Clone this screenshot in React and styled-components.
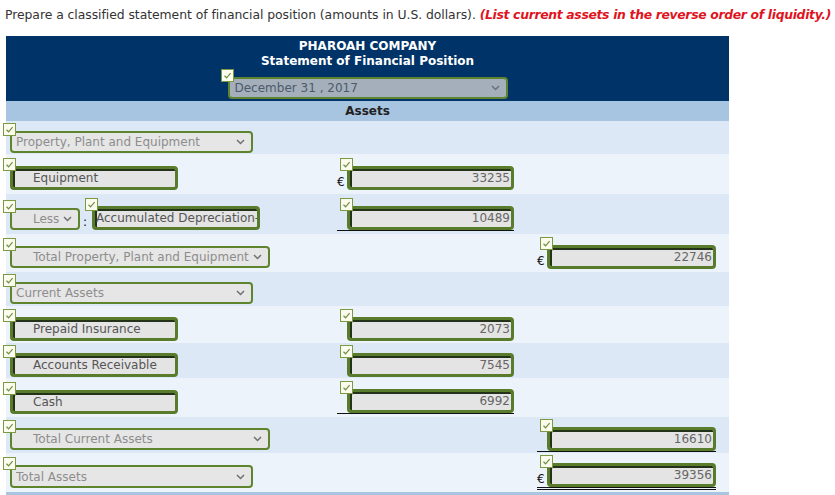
import React from "react";
import styled, { createGlobalStyle } from "styled-components";

const Global = createGlobalStyle`
  html, body { margin: 0; padding: 0; background: #fff; }
  body { font-family: "DejaVu Sans", Verdana, sans-serif; }
`;

const Page = styled.div`
  padding: 7px 0 0 6px;
  width: 829px;
`;

const Instruction = styled.p`
  margin: 0 0 0 -1px;
  font-size: 12.4px;
  line-height: 16px;
  color: #333;
  white-space: nowrap;
  letter-spacing: -0.05px;
`;

const Red = styled.span`
  color: #e0141e;
  font-weight: bold;
  font-style: italic;
  letter-spacing: -0.33px;
`;

const Table = styled.div`
  margin-top: 13px;
  width: 723px;
  border-bottom: 4px solid #a8c4df;
`;

const Header = styled.div`
  background: #003468;
  color: #fff;
  display: flex;
  flex-direction: column;
  align-items: center;
  padding: 3px 0 2px;
  font-size: 12px;
  line-height: 15px;
`;

const Title = styled.div`
  font-weight: bold;
`;

const SubBar = styled.div`
  background: #a7c4e0;
  height: 20px;
  line-height: 20px;
  text-align: center;
  font-weight: bold;
  font-size: 12px;
  color: #222;
`;

const Row = styled.div`
  display: grid;
  grid-template-columns: 330px 200px 193px;
  height: ${(p) => p.$h}px;
  background: ${(p) => (p.$alt ? "#edf3fb" : "#dde8f6")};
  align-items: center;
`;

const LabelCell = styled.div`
  display: flex;
  align-items: flex-end;
  padding-left: 4px;
`;

const NumCell = styled.div`
  display: flex;
  align-items: flex-end;
  padding-left: 1px;
`;

const NumWrap = styled.div`
  display: flex;
  align-items: flex-end;
  border-bottom: ${(p) =>
    p.$line === "double" ? "3px double #111" : p.$line === "single" ? "1px solid #111" : "none"};
`;

const Field = styled.div`
  position: relative;
  padding-top: 8px;
`;

const CheckBox = styled.svg`
  position: absolute;
  top: 0;
  left: -7px;
  width: 13px;
  height: 13px;
`;

const Check = () => (
  <CheckBox viewBox="0 0 13 13">
    <rect x="0.5" y="0.5" width="12" height="12" fill="#fbfbee" stroke="#7b9a43" />
    <path d="M3.5 6.8 L5.6 8.8 L9.6 4.2" fill="none" stroke="#6f8f45" strokeWidth="1.2" />
  </CheckBox>
);

const Select = styled.div`
  box-sizing: border-box;
  width: ${(p) => p.$w}px;
  height: ${(p) => p.$hgt || 22}px;
  border: 2px solid #5e852d;
  border-radius: 4px;
  background: ${(p) => (p.$dark ? "#a4afbb" : "#e6e6e6")};
  color: ${(p) => (p.$dark ? "#4d5a6b" : "#8d8d8d")};
  font-size: 12px;
  font-weight: normal;
  display: flex;
  align-items: center;
  padding-left: ${(p) => p.$pad}px;
  padding-right: 6px;
`;

const SelText = styled.span`
  flex: 1;
  white-space: nowrap;
  overflow: hidden;
`;

const Chevron = () => (
  <svg width="9" height="6" viewBox="0 0 9 6">
    <path d="M1 1 L4.5 4.5 L8 1" fill="none" stroke="#707070" strokeWidth="1.5" />
  </svg>
);

const TextBox = styled.div`
  box-sizing: border-box;
  width: ${(p) => p.$w}px;
  height: ${(p) => p.$hgt || 24}px;
  border: 3px solid #587c2b;
  border-radius: 4px;
  box-shadow: inset 2px 2px 0 #24321a;
  background: #e4e4e4;
  color: ${(p) => (p.$num ? "#666" : "#555")};
  font-size: 12px;
  display: flex;
  align-items: center;
  justify-content: ${(p) => (p.$num ? "flex-end" : "flex-start")};
  padding-left: ${(p) => p.$pad || 0}px;
  padding-right: ${(p) => (p.$num ? 1 : 0)}px;
  white-space: nowrap;
  overflow: hidden;
`;

const Currency = styled.span`
  width: 10px;
  font-size: 12px;
  color: #111;
  line-height: 12px;
  padding-bottom: 2px;
`;

const Colon = styled.span`
  font-size: 12px;
  color: #111;
  width: 12px;
  padding-left: 3px;
  box-sizing: border-box;
  padding-bottom: 1px;
`;

const Amount = ({ value, cur, line, w = 167 }) => (
  <NumWrap $line={line}>
    <Currency>{cur ? "€" : ""}</Currency>
    <Field>
      <Check />
      <TextBox $w={w} $num>
        {value}
      </TextBox>
    </Field>
  </NumWrap>
);

const SelField = ({ w, pad, text, hgt, dark }) => (
  <Field>
    <Check />
    <Select $w={w} $pad={pad} $hgt={hgt} $dark={dark}>
      <SelText>{text}</SelText>
      <Chevron />
    </Select>
  </Field>
);

const TextField = ({ text, w = 168, pad = 20 }) => (
  <Field>
    <Check />
    <TextBox $w={w} $pad={pad}>
      {text}
    </TextBox>
  </Field>
);

export default function App() {
  return (
    <>
      <Global />
      <Page>
        <Instruction>
          Prepare a classified statement of financial position (amounts in U.S. dollars).{" "}
          <Red>(List current assets in the reverse order of liquidity.)</Red>
        </Instruction>
        <Table>
          <Header>
            <Title>PHAROAH COMPANY</Title>
            <Title>Statement of Financial Position</Title>
            <SelField w={280} pad={5} text="December 31 , 2017" dark />
          </Header>
          <SubBar>Assets</SubBar>

          <Row $h={33}>
            <LabelCell>
              <SelField w={243} pad={4} text="Property, Plant and Equipment" />
            </LabelCell>
            <div />
            <div />
          </Row>

          <Row $h={40} $alt>
            <LabelCell>
              <TextField text="Equipment" />
            </LabelCell>
            <NumCell>
              <Amount value="33235" cur />
            </NumCell>
            <div />
          </Row>

          <Row $h={40}>
            <LabelCell>
              <SelField w={70} pad={21} text="Less" />
              <Colon>:</Colon>
              <TextField text="Accumulated Depreciation-" pad={1} />
            </LabelCell>
            <NumCell>
              <Amount value="10489" line="single" />
            </NumCell>
            <div />
          </Row>

          <Row $h={38} $alt>
            <LabelCell>
              <SelField w={260} pad={21} text="Total Property, Plant and Equipment" />
            </LabelCell>
            <div />
            <NumCell>
              <Amount value="22746" cur w={169} />
            </NumCell>
          </Row>

          <Row $h={34}>
            <LabelCell>
              <SelField w={243} pad={4} text="Current Assets" />
            </LabelCell>
            <div />
            <div />
          </Row>

          <Row $h={37} $alt>
            <LabelCell>
              <TextField text="Prepaid Insurance" />
            </LabelCell>
            <NumCell>
              <Amount value="2073" />
            </NumCell>
            <div />
          </Row>

          <Row $h={35}>
            <LabelCell>
              <TextField text="Accounts Receivable" />
            </LabelCell>
            <NumCell>
              <Amount value="7545" />
            </NumCell>
            <div />
          </Row>

          <Row $h={39} $alt>
            <LabelCell>
              <TextField text="Cash" />
            </LabelCell>
            <NumCell>
              <Amount value="6992" line="single" />
            </NumCell>
            <div />
          </Row>

          <Row $h={36}>
            <LabelCell>
              <SelField w={260} pad={21} text="Total Current Assets" />
            </LabelCell>
            <div />
            <NumCell>
              <Amount value="16610" line="single" w={169} />
            </NumCell>
          </Row>

          <Row $h={39} $alt>
            <LabelCell>
              <SelField w={243} pad={4} text="Total Assets" hgt={23} />
            </LabelCell>
            <div />
            <NumCell>
              <Amount value="39356" cur line="double" w={169} />
            </NumCell>
          </Row>
        </Table>
      </Page>
    </>
  );
}
